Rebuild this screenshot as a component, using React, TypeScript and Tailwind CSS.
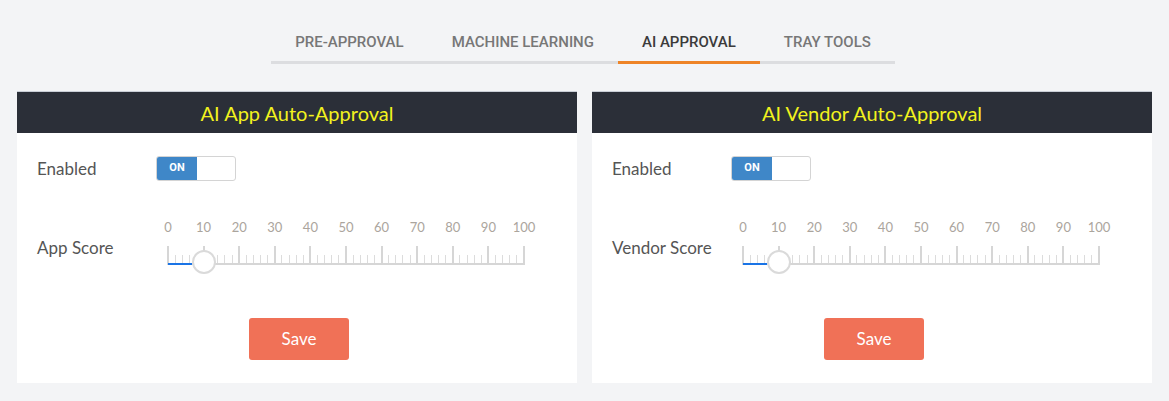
import React from "react";

const body = { fontFamily: "Lato, 'Open Sans', sans-serif" };
const roboto = { fontFamily: "Roboto, 'Liberation Sans', sans-serif" };

function Toggle() {
  return (
    <div className="flex w-[80px] h-[25px] rounded-[3px] border border-[#d4d4d4] overflow-hidden bg-white">
      <div className="w-[40px] h-full bg-[#3f87c8] flex items-center justify-center text-white text-[11px] font-bold" style={roboto}>
        ON
      </div>
    </div>
  );
}

function Slider() {
  const W = 356;
  const ticks: { x: number; major: boolean }[] = [];
  for (let i = 0; i <= 50; i++) {
    const v = i * 2;
    ticks.push({ x: (v / 100) * W, major: v % 10 === 0 });
  }
  const labels = [0, 10, 20, 30, 40, 50, 60, 70, 80, 90, 100];
  const hx = (10 / 100) * W;
  return (
    <div className="relative w-[380px] h-[62px]">
      <div className="absolute left-[12px] top-0 w-[356px] h-full">
        {labels.map((l) => (
          <span
            key={l}
            className="absolute top-[4px] text-[13px] leading-[16px] text-[#aba59d] -translate-x-1/2"
            style={{ left: (l / 100) * W }}
          >
            {l}
          </span>
        ))}
        {ticks.map((t, i) =>
          t.major ? (
            <div key={i} className="absolute top-[31px] h-[19px] w-[2px] bg-[#d6d6d6]" style={{ left: t.x - 1 }} />
          ) : (
            <div key={i} className="absolute top-[40px] h-[10px] w-[1px] bg-[#dcdcdc]" style={{ left: t.x - 0.5 }} />
          )
        )}
        <div className="absolute top-[48px] left-0 w-[356px] h-[2px] bg-[#d6d6d6]" />
        <div className="absolute top-[48px] left-0 w-[24px] h-[2px] bg-[#1a74e6]" />
        <div
          className="absolute top-[35px] w-[24px] h-[24px] rounded-full bg-white border-2 border-[#dadada]"
          style={{ left: hx - 12 }}
        />
      </div>
    </div>
  );
}

function Panel({ title, scoreLabel }: { title: string; scoreLabel: string }) {
  return (
    <div className="w-[560px] bg-white flex flex-col">
      <div className="h-[42px] bg-[#2b2f38] border-t border-[#c9ced6] flex items-center justify-center">
        <span className="text-[20px] text-[#f2f21e]" style={body}>
          {title}
        </span>
      </div>
      <div className="h-[250px] flex flex-col pl-[20px]" style={body}>
        <div className="flex items-center mt-[23px] h-[25px]">
          <div className="w-[119px] text-[17px] text-[#555]">Enabled</div>
          <Toggle />
        </div>
        <div className="flex items-center mt-[34px]">
          <div className="w-[119px] text-[17px] text-[#555] pt-[4px]">{scoreLabel}</div>
          <Slider />
        </div>
        <div className="flex justify-center mt-[41px] pr-[16px]">
          <button className="w-[100px] h-[42px] rounded-[3px] bg-[#f07157] text-white text-[17px]" style={body}>
            Save
          </button>
        </div>
      </div>
    </div>
  );
}

export default function App() {
  const tabs = ["PRE-APPROVAL", "MACHINE LEARNING", "AI APPROVAL", "TRAY TOOLS"];
  return (
    <div className="w-[1169px] h-[401px] bg-[#f3f4f6] overflow-hidden">
      <div className="flex justify-center pt-[22px] pr-[3px]">
        {tabs.map((t, i) => (
          <div
            key={t}
            className={
              "px-6 pt-[10px] pb-[9px] text-[15px] leading-[20px] font-medium border-b-[3px] " +
              (i === 2 ? "border-[#ee8427] text-[#3b3b3b]" : "border-[#dcdde0] text-[#777]")
            }
            style={roboto}
          >
            {t}
          </div>
        ))}
      </div>
      <div className="flex gap-[15px] px-[17px] mt-[27px]">
        <Panel title="AI App Auto-Approval" scoreLabel="App Score" />
        <Panel title="AI Vendor Auto-Approval" scoreLabel="Vendor Score" />
      </div>
    </div>
  );
}
